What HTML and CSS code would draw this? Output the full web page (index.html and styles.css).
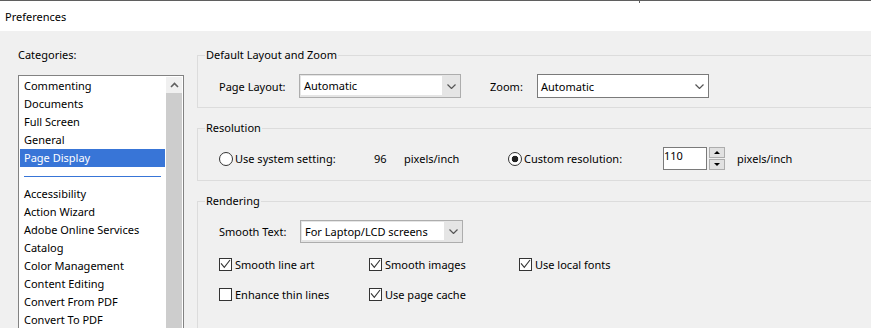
FILE: index.html
```html
<!DOCTYPE html>
<html lang="en">
<head>
  <meta charset="UTF-8">
  <title>Preferences</title>
  <link rel="stylesheet" href="styles.css">
</head>
<body>

<div class="window">
  <div class="titlebar">Preferences</div>

  <div class="main">
    <div class="sidebar">
      <div class="cat-label">Categories:</div>
      <div class="listbox">
        <ul class="items">
          <li>Commenting</li>
          <li>Documents</li>
          <li>Full Screen</li>
          <li>General</li>
          <li class="selected">Page Display</li>
          <li class="sep"><span></span></li>
          <li>Accessibility</li>
          <li>Action Wizard</li>
          <li>Adobe Online Services</li>
          <li>Catalog</li>
          <li>Color Management</li>
          <li>Content Editing</li>
          <li>Convert From PDF</li>
          <li>Convert To PDF</li>
        </ul>
        <div class="scrollbar">
          <div class="scroll-up">
            <svg width="9" height="6" viewBox="0 0 9 6"><polyline points="1,5 4.5,1.5 8,5" fill="none" stroke="#606060" stroke-width="1.6"/></svg>
          </div>
          <div class="thumb"></div>
        </div>
      </div>
    </div>

    <div class="content">
      <div class="group">
        <div class="group-title">Default Layout and Zoom</div>
        <div class="row tall">
          <span class="field-label layout-label">Page Layout:</span>
          <div class="combo layout-combo">
            <span class="value">Automatic</span>
            <span class="arrow"><svg width="9" height="5" viewBox="0 0 9 5"><polyline points="0.5,0.5 4.5,4.5 8.5,0.5" fill="none" stroke="#555" stroke-width="1.2"/></svg></span>
          </div>
          <span class="field-label zoom-label">Zoom:</span>
          <div class="combo plain zoom-combo">
            <span class="value">Automatic</span>
            <span class="arrow"><svg width="9" height="5" viewBox="0 0 9 5"><polyline points="0.5,0.5 4.5,4.5 8.5,0.5" fill="none" stroke="#555" stroke-width="1.2"/></svg></span>
          </div>
        </div>
      </div>

      <div class="group">
        <div class="group-title">Resolution</div>
        <div class="row res-row">
          <label class="radio"><span class="dot"></span>Use system setting:</label>
          <span class="res-value">96</span>
          <span class="res-unit">pixels/inch</span>
          <label class="radio"><span class="dot on"></span>Custom resolution:</label>
          <span class="num">110</span>
          <div class="spin">
            <span class="spin-btn"><i class="tri up"></i></span>
            <span class="spin-btn"><i class="tri down"></i></span>
          </div>
          <span class="unit-after">pixels/inch</span>
        </div>
      </div>

      <div class="group last">
        <div class="group-title">Rendering</div>
        <div class="row">
          <span class="field-label text-label">Smooth Text:</span>
          <div class="combo text-combo">
            <span class="value">For Laptop/LCD screens</span>
            <span class="arrow"><svg width="9" height="5" viewBox="0 0 9 5"><polyline points="0.5,0.5 4.5,4.5 8.5,0.5" fill="none" stroke="#555" stroke-width="1.2"/></svg></span>
          </div>
        </div>
        <div class="row check-row first">
          <label class="check"><span class="box"><svg width="11" height="11" viewBox="0 0 11 11"><polyline points="1,4.3 4.3,8.3 10,1" fill="none" stroke="#333" stroke-width="1.1"/></svg></span>Smooth line art</label>
          <label class="check"><span class="box"><svg width="11" height="11" viewBox="0 0 11 11"><polyline points="1,4.3 4.3,8.3 10,1" fill="none" stroke="#333" stroke-width="1.1"/></svg></span>Smooth images</label>
          <label class="check"><span class="box"><svg width="11" height="11" viewBox="0 0 11 11"><polyline points="1,4.3 4.3,8.3 10,1" fill="none" stroke="#333" stroke-width="1.1"/></svg></span>Use local fonts</label>
        </div>
        <div class="row check-row">
          <label class="check"><span class="box"></span>Enhance thin lines</label>
          <label class="check"><span class="box"><svg width="11" height="11" viewBox="0 0 11 11"><polyline points="1,4.3 4.3,8.3 10,1" fill="none" stroke="#333" stroke-width="1.1"/></svg></span>Use page cache</label>
        </div>
      </div>
    </div>
  </div>
</div>

</body>
</html>
```

FILE: styles.css
```css
body {
  margin: 0;
  font-family: "Noto Sans", "Segoe UI", sans-serif;
  font-size: 11px;
  color: #000;
  background: #f0f0f0;
}
.window {
  width: 871px;
  height: 328px;
  overflow: hidden;
  display: flex;
  flex-direction: column;
}
.titlebar {
  position: relative;
  height: 30px;
  background: #fff;
  border-top: 1px solid #5f5f5f;
  padding-left: 5px;
  display: flex;
  align-items: center;
}
.titlebar::after {
  content: "";
  position: absolute;
  left: 639px;
  top: 0;
  width: 1px;
  height: 2px;
  background: #5f5f5f;
}
.main {
  flex: 1;
  display: flex;
  min-height: 0;
}

/* categories list */
.sidebar {
  width: 166px;
  margin-left: 18px;
  display: flex;
  flex-direction: column;
  flex-shrink: 0;
}
.cat-label {
  line-height: 16px;
  margin-top: 16px;
}
.listbox {
  margin-top: 12px;
  height: 270px;
  flex-shrink: 0;
  background: #fff;
  border: 1px solid #828282;
  display: flex;
}
.items {
  list-style: none;
  margin: 0;
  padding: 1px 0 0;
  flex: 1;
}
.items li {
  height: 18px;
  line-height: 18px;
  padding-left: 4px;
  margin: 0 1px;
  white-space: nowrap;
}
.items li.selected {
  background: #3875d7;
  color: #fff;
}
.items li.sep {
  display: flex;
  align-items: center;
  padding: 0 4px;
}
.items li.sep span {
  flex: 1;
  height: 1px;
  background: #3875d7;
}
.scrollbar {
  width: 16px;
  margin-right: 1px;
  padding-top: 1px;
  display: flex;
  flex-direction: column;
}
.scroll-up {
  height: 16px;
  background: #f0f0f0;
  display: flex;
  align-items: center;
  justify-content: center;
}
.thumb {
  flex: 1;
  background: #cdcdcd;
}

/* group boxes */
.content {
  flex: 1;
  margin-left: 13px;
  padding-top: 24px;
  display: flex;
  flex-direction: column;
}
.group {
  border: 1px solid #dcdcdc;
  border-right: none;
  padding: 0 0 9px 21px;
}
.group + .group {
  margin-top: 20px;
  padding-bottom: 10px;
}
.group.last {
  padding-bottom: 40px;
}
.group-title {
  width: fit-content;
  margin: -9px 0 0 -14px;
  padding: 0 1px;
  background: #f0f0f0;
  line-height: 16px;
}
.row {
  display: flex;
  align-items: center;
  margin-top: 11px;
  white-space: nowrap;
}
.field-label {
  flex-shrink: 0;
}
.layout-label { width: 80px; }
.zoom-label { width: 47px; margin-left: 29px; }
.text-label { width: 81px; }

.combo {
  box-sizing: border-box;
  height: 23px;
  border: 1px solid #adadad;
  background: #e5e5e5;
  display: flex;
  flex-shrink: 0;
}
.combo .value {
  flex: 1;
  margin: 1px 0 2px 1px;
  padding-left: 3px;
  background: #fff;
  display: flex;
  align-items: center;
}
.combo .arrow {
  width: 18px;
  display: flex;
  align-items: center;
  justify-content: center;
}
.combo.plain {
  border-color: #7a7a7a;
  background: #fff;
}
.combo.plain .value {
  margin: 0;
}
.layout-combo { width: 162px; height: 24px; }
.zoom-combo { width: 172px; height: 24px; }
.text-combo { width: 163px; }

/* resolution */
.res-row {
  height: 23px;
}
.radio {
  width: 155px;
  display: flex;
  align-items: center;
  gap: 2px;
  flex-shrink: 0;
}
.dot {
  box-sizing: border-box;
  width: 14px;
  height: 14px;
  border: 1px solid #333;
  border-radius: 50%;
  background: #fff;
}
.dot.on {
  background: radial-gradient(circle, #222 0 3px, #fff 3.6px);
}
.res-value { width: 30px; }
.res-unit { width: 104px; }
.num {
  box-sizing: border-box;
  width: 44px;
  height: 23px;
  border: 1px solid #7a7a7a;
  background: #fff;
  line-height: 16px;
  align-self: flex-start;
}
.spin {
  width: 16px;
  height: 23px;
  margin-left: 2px;
  display: flex;
  flex-direction: column;
  gap: 1px;
}
.spin-btn {
  box-sizing: border-box;
  height: 11px;
  border: 1px solid #adadad;
  background: #e1e1e1;
  display: flex;
  align-items: center;
  justify-content: center;
}
.tri {
  width: 0;
  height: 0;
  border-left: 3px solid transparent;
  border-right: 3px solid transparent;
}
.tri.up { border-bottom: 3px solid #000; }
.tri.down { border-top: 3px solid #000; }
.unit-after { margin-left: 12px; }

/* rendering checkboxes */
.check-row {
  height: 18px;
  margin-top: 12px;
}
.check-row.first {
  margin-top: 12px;
}
.check {
  width: 150px;
  display: flex;
  align-items: center;
  gap: 3px;
  flex-shrink: 0;
}
.box {
  box-sizing: border-box;
  width: 13px;
  height: 13px;
  border: 1px solid #333;
  background: #fff;
  display: flex;
}
```
